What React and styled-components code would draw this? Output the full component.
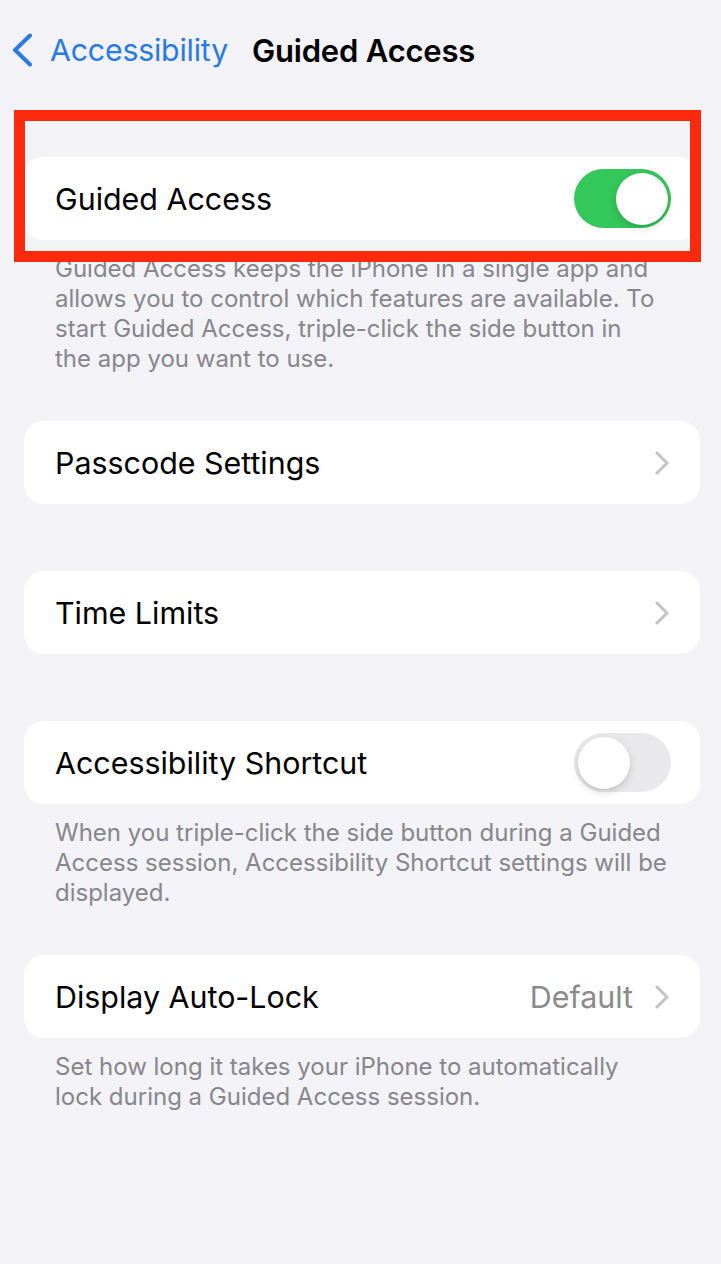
import React from "react";
import styled, { createGlobalStyle } from "styled-components";

const GlobalStyle = createGlobalStyle`
  html, body {
    margin: 0;
    padding: 0;
    background: #f2f2f7;
  }
  body {
    font-family: Inter, "Noto Sans", "Liberation Sans", sans-serif;
    -webkit-font-smoothing: antialiased;
  }
`;

const Page = styled.div`
  width: 721px;
  min-height: 1264px;
  background: #f2f2f7;
  box-sizing: border-box;
`;

const NavBar = styled.header`
  height: 100px;
  display: flex;
  align-items: center;
  padding-left: 11px;
  box-sizing: border-box;
`;

const BackLink = styled.div`
  display: flex;
  align-items: center;
  gap: 17px;
  color: #2a7ae4;
  font-size: 30.3px;
  letter-spacing: -0.2px;
`;

const NavTitle = styled.h1`
  margin: 0 0 0 24px;
  font-size: 31px;
  font-weight: 600;
  color: #000;
  letter-spacing: -0.2px;
`;

const List = styled.main`
  display: flex;
  flex-direction: column;
  gap: 47px;
  padding: 57px 21px 0 24px;
`;

const Group = styled.section`
  position: relative;
  padding-bottom: ${(p) => (p.$bare ? "20px" : "0")};
`;

const Card = styled.div`
  height: 83px;
  background: #fff;
  border-radius: 20px;
  display: flex;
  align-items: center;
  justify-content: space-between;
  padding: 0 ${(p) => (p.$toggle ? "29px" : "31px")} 0 31px;
  box-sizing: border-box;
`;

const Label = styled.span`
  font-size: 30.4px;
  color: #000;
`;

const Trailing = styled.div`
  display: flex;
  align-items: center;
  gap: 22px;
`;

const Value = styled.span`
  font-size: 30.4px;
  color: #8a8a8e;
`;

const Footer = styled.p`
  margin: 0;
  padding: 14px 30px 0 31px;
  font-size: 24px;
  line-height: 30px;
  color: #86868b;
`;

const Switch = styled.div`
  position: relative;
  width: 97px;
  height: 59px;
  border-radius: 30px;
  background: ${(p) => (p.$on ? "#34c759" : "#e9e9eb")};
  flex-shrink: 0;

  &::after {
    content: "";
    position: absolute;
    top: 3.5px;
    left: ${(p) => (p.$on ? "41.5px" : "3.5px")};
    width: 52px;
    height: 52px;
    border-radius: 50%;
    background: #fff;
    box-shadow: 0 3px 8px rgba(0, 0, 0, 0.15), 0 1px 1px rgba(0, 0, 0, 0.08);
  }
`;

const Highlight = styled.div`
  position: absolute;
  top: -47px;
  left: -10px;
  width: 687px;
  height: 152px;
  border: 11px solid #fc2a0c;
  box-sizing: border-box;
  pointer-events: none;
`;

function BackChevron() {
  return (
    <svg width="22" height="34" viewBox="0 0 22 34">
      <polyline
        points="19,2.5 4,17 19,31.5"
        fill="none"
        stroke="#2a7ae4"
        strokeWidth="4"
        strokeLinecap="round"
        strokeLinejoin="round"
      />
    </svg>
  );
}

function Chevron() {
  return (
    <svg width="14" height="24" viewBox="0 0 14 24">
      <polyline
        points="2,2 12,12 2,22"
        fill="none"
        stroke="#c4c4c7"
        strokeWidth="3"
        strokeLinecap="round"
        strokeLinejoin="round"
      />
    </svg>
  );
}

const sections = [
  {
    label: "Guided Access",
    toggle: true,
    on: true,
    highlight: true,
    footer:
      "Guided Access keeps the iPhone in a single app and allows you to control which features are available. To start Guided Access, triple-click the side button in the\u00a0app you want to use.",
  },
  { label: "Passcode Settings" },
  { label: "Time Limits" },
  {
    label: "Accessibility Shortcut",
    toggle: true,
    on: false,
    footer:
      "When you triple-click the side button during a Guided Access session, Accessibility Shortcut settings will be displayed.",
  },
  {
    label: "Display Auto-Lock",
    value: "Default",
    footer:
      "Set how long it takes your iPhone to automatically lock during a Guided Access session.",
  },
];

export default function App() {
  return (
    <Page>
      <GlobalStyle />
      <NavBar>
        <BackLink>
          <BackChevron />
          <span>Accessibility</span>
        </BackLink>
        <NavTitle>Guided Access</NavTitle>
      </NavBar>
      <List>
        {sections.map((s) => (
          <Group key={s.label} $bare={!s.footer}>
            <Card $toggle={s.toggle}>
              <Label>{s.label}</Label>
              {s.toggle ? (
                <Switch $on={s.on} />
              ) : (
                <Trailing>
                  {s.value && <Value>{s.value}</Value>}
                  <Chevron />
                </Trailing>
              )}
            </Card>
            {s.highlight && <Highlight />}
            {s.footer && <Footer>{s.footer}</Footer>}
          </Group>
        ))}
      </List>
    </Page>
  );
}
